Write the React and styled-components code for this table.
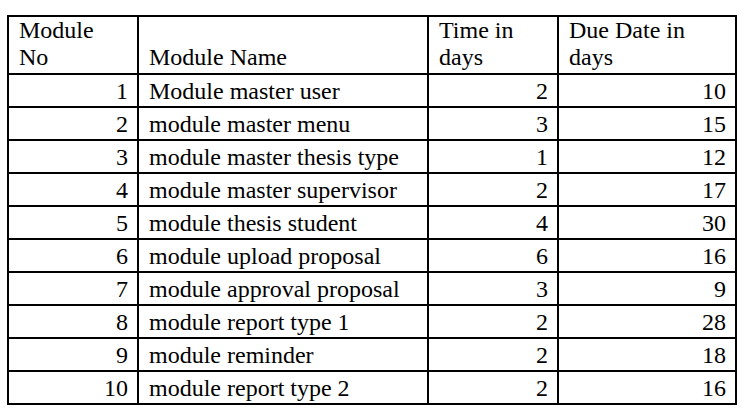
import React from 'react'
import styled, { createGlobalStyle } from 'styled-components'

const GlobalStyle = createGlobalStyle`
  html, body {
    margin: 0;
    padding: 0;
    background: #ffffff;
  }
  body {
    font-family: "Liberation Serif", "Times New Roman", serif;
    color: #000;
  }
`

const Page = styled.div`
  padding: 15px 0 0 7px;
`

const Table = styled.table`
  border-collapse: collapse;
  table-layout: fixed;
  width: 728px;
  border: 2px solid #000;
  font-family: "Liberation Serif", "Times New Roman", serif;
  font-size: 24px;
  line-height: 27px;
  color: #000;
`

const HeadCell = styled.th`
  border: 2px solid #000;
  padding: 0 8px 2px 10px;
  height: 54px;
  font-weight: normal;
  text-align: left;
  vertical-align: bottom;
`

const Cell = styled.td`
  border: 2px solid #000;
  height: 28px;
  padding: 3px ${({ $align }) => ($align === 'right' ? '9px' : '8px')} 0 10px;
  text-align: ${({ $align }) => $align || 'left'};
  vertical-align: top;
  white-space: nowrap;
`

const modules = [
  [1, 'Module master user', 2, 10],
  [2, 'module master menu', 3, 15],
  [3, 'module master thesis type', 1, 12],
  [4, 'module master supervisor', 2, 17],
  [5, 'module thesis student', 4, 30],
  [6, 'module upload proposal', 6, 16],
  [7, 'module approval proposal', 3, 9],
  [8, 'module report type 1', 2, 28],
  [9, 'module reminder', 2, 18],
  [10, 'module report type 2', 2, 16],
]

export default function App() {
  return (
    <>
      <GlobalStyle />
      <Page>
        <Table>
          <colgroup>
            <col style={{ width: 130 }} />
            <col style={{ width: 290 }} />
            <col style={{ width: 130 }} />
            <col style={{ width: 178 }} />
          </colgroup>
          <thead>
            <tr>
              <HeadCell>Module<br />No</HeadCell>
              <HeadCell>Module Name</HeadCell>
              <HeadCell>Time in<br />days</HeadCell>
              <HeadCell>Due Date in<br />days</HeadCell>
            </tr>
          </thead>
          <tbody>
            {modules.map(([no, name, time, due]) => (
              <tr key={no}>
                <Cell $align="right">{no}</Cell>
                <Cell>{name}</Cell>
                <Cell $align="right">{time}</Cell>
                <Cell $align="right">{due}</Cell>
              </tr>
            ))}
          </tbody>
        </Table>
      </Page>
    </>
  )
}
